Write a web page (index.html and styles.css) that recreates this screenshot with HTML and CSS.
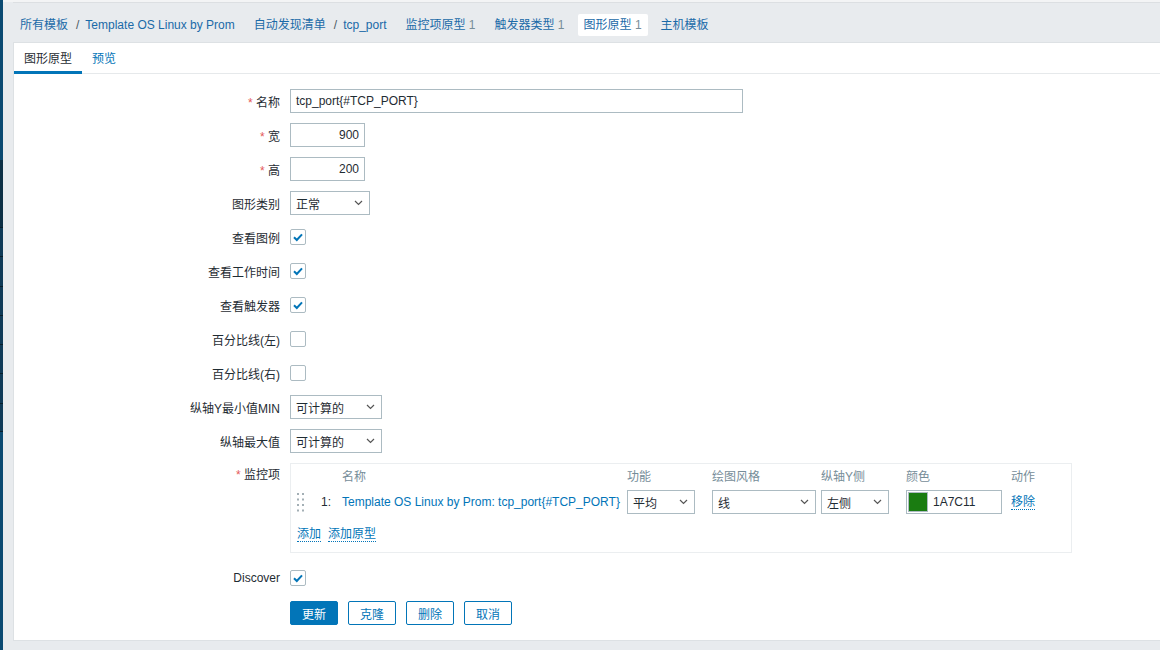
FILE: index.html
```html
<!DOCTYPE html>
<html>
<head>
<meta charset="utf-8">
<link rel="stylesheet" href="styles.css">
</head>
<body>
<div class="app">
  <div class="strip">
    <div class="seg seg-top"></div>
    <div class="seg seg-dark"></div>
    <div class="seg seg-item"></div>
    <div class="seg seg-item"></div>
    <div class="seg seg-item"></div>
    <div class="seg seg-item"></div>
    <div class="seg seg-item"></div>
    <div class="seg seg-item"></div>
    <div class="seg seg-item last"></div>
    <div class="seg seg-rest"></div>
  </div>
  <div class="main">
    <div class="crumbs">
      <div class="crumb-group">
        <a class="crumb">所有模板</a><span class="sep">/</span><a class="crumb">Template OS Linux by Prom</a>
      </div>
      <div class="crumb-group">
        <a class="crumb">自动发现清单</a><span class="sep">/</span><a class="crumb">tcp_port</a>
      </div>
      <a class="crumb">监控项原型 <span class="cnt">1</span></a>
      <a class="crumb">触发器类型 <span class="cnt">1</span></a>
      <span class="crumb active">图形原型 <span class="cnt">1</span></span>
      <a class="crumb">主机模板</a>
    </div>
    <div class="panel">
      <div class="tabs">
        <span class="tab current">图形原型</span>
        <a class="tab">预览</a>
      </div>
      <div class="form">
        <div class="row">
          <div class="label"><span class="req">*</span> 名称</div>
          <div class="ctrl"><div class="input wide">tcp_port{#TCP_PORT}</div></div>
        </div>
        <div class="row">
          <div class="label"><span class="req">*</span> 宽</div>
          <div class="ctrl"><div class="input num">900</div></div>
        </div>
        <div class="row">
          <div class="label"><span class="req">*</span> 高</div>
          <div class="ctrl"><div class="input num">200</div></div>
        </div>
        <div class="row">
          <div class="label">图形类别</div>
          <div class="ctrl"><div class="select w80"><span>正常</span><svg class="chev" width="9" height="6" viewBox="0 0 9 6"><path d="M1 1 L4.5 4.5 L8 1" fill="none" stroke="#555" stroke-width="1.2"/></svg></div></div>
        </div>
        <div class="row">
          <div class="label">查看图例</div>
          <div class="ctrl"><div class="cb"><svg width="14" height="14" viewBox="0 0 14 14"><path d="M3 7.2 L5.8 10 L11 4.3" fill="none" stroke="#0275b8" stroke-width="2"/></svg></div></div>
        </div>
        <div class="row">
          <div class="label">查看工作时间</div>
          <div class="ctrl"><div class="cb"><svg width="14" height="14" viewBox="0 0 14 14"><path d="M3 7.2 L5.8 10 L11 4.3" fill="none" stroke="#0275b8" stroke-width="2"/></svg></div></div>
        </div>
        <div class="row">
          <div class="label">查看触发器</div>
          <div class="ctrl"><div class="cb"><svg width="14" height="14" viewBox="0 0 14 14"><path d="M3 7.2 L5.8 10 L11 4.3" fill="none" stroke="#0275b8" stroke-width="2"/></svg></div></div>
        </div>
        <div class="row">
          <div class="label">百分比线(左)</div>
          <div class="ctrl"><div class="cb"></div></div>
        </div>
        <div class="row">
          <div class="label">百分比线(右)</div>
          <div class="ctrl"><div class="cb"></div></div>
        </div>
        <div class="row">
          <div class="label">纵轴Y最小值MIN</div>
          <div class="ctrl"><div class="select w92"><span>可计算的</span><svg class="chev" width="9" height="6" viewBox="0 0 9 6"><path d="M1 1 L4.5 4.5 L8 1" fill="none" stroke="#555" stroke-width="1.2"/></svg></div></div>
        </div>
        <div class="row">
          <div class="label">纵轴最大值</div>
          <div class="ctrl"><div class="select w92"><span>可计算的</span><svg class="chev" width="9" height="6" viewBox="0 0 9 6"><path d="M1 1 L4.5 4.5 L8 1" fill="none" stroke="#555" stroke-width="1.2"/></svg></div></div>
        </div>
        <div class="row row-items">
          <div class="label top"><span class="req">*</span> 监控项</div>
          <div class="ctrl">
            <div class="items">
              <div class="irow ihead">
                <div></div><div></div>
                <div>名称</div><div>功能</div><div>绘图风格</div><div>纵轴Y侧</div><div>颜色</div><div>动作</div>
              </div>
              <div class="irow idata">
                <div class="handle"><svg width="7" height="19" viewBox="0 0 7 19"><g fill="#a3afb5"><rect x="0" y="0" width="2" height="2"/><rect x="5" y="0" width="2" height="2"/><rect x="0" y="5.5" width="2" height="2"/><rect x="5" y="5.5" width="2" height="2"/><rect x="0" y="11" width="2" height="2"/><rect x="5" y="11" width="2" height="2"/><rect x="0" y="16.5" width="2" height="2"/><rect x="5" y="16.5" width="2" height="2"/></g></svg></div>
                <div class="num-idx">1:</div>
                <div><a class="link">Template OS Linux by Prom: tcp_port{#TCP_PORT}</a></div>
                <div><div class="select w68"><span>平均</span><svg class="chev" width="9" height="6" viewBox="0 0 9 6"><path d="M1 1 L4.5 4.5 L8 1" fill="none" stroke="#555" stroke-width="1.2"/></svg></div></div>
                <div><div class="select w104"><span>线</span><svg class="chev" width="9" height="6" viewBox="0 0 9 6"><path d="M1 1 L4.5 4.5 L8 1" fill="none" stroke="#555" stroke-width="1.2"/></svg></div></div>
                <div><div class="select w68"><span>左侧</span><svg class="chev" width="9" height="6" viewBox="0 0 9 6"><path d="M1 1 L4.5 4.5 L8 1" fill="none" stroke="#555" stroke-width="1.2"/></svg></div></div>
                <div><div class="color"><span class="swatch"></span><span>1A7C11</span></div></div>
                <div><a class="dlink">移除</a></div>
              </div>
              <div class="iadd">
                <a class="dlink">添加</a><a class="dlink">添加原型</a>
              </div>
            </div>
          </div>
        </div>
        <div class="row row-discover">
          <div class="label">Discover</div>
          <div class="ctrl"><div class="cb"><svg width="14" height="14" viewBox="0 0 14 14"><path d="M3 7.2 L5.8 10 L11 4.3" fill="none" stroke="#0275b8" stroke-width="2"/></svg></div></div>
        </div>
        <div class="row">
          <div class="label"></div>
          <div class="ctrl buttons">
            <button class="btn primary">更新</button>
            <button class="btn">克隆</button>
            <button class="btn">删除</button>
            <button class="btn">取消</button>
          </div>
        </div>
      </div>
    </div>
  </div>
</div>
</body>
</html>
```

FILE: styles.css
```css
* { box-sizing: border-box; }
html, body { margin: 0; padding: 0; }
body {
  width: 1160px;
  height: 650px;
  overflow: hidden;
  background: #e8ebee;
  font-family: "Liberation Sans", Arial, "Noto Sans CJK SC", sans-serif;
  font-size: 12px;
  color: #1f2c33;
}
a { text-decoration: none; color: #0275b8; cursor: pointer; }

.app { display: flex; height: 650px; }

.strip { width: 3px; display: flex; flex-direction: column; flex: none; }
.seg-top { height: 160px; background: #0b4a72; }
.seg-dark { height: 67px; background: #0c2f45; }
.seg-item { height: 29.3px; background: #0f3b58; border-top: 1px solid #081e2c; }
.seg-item.last { border-bottom: 1px solid #081e2c; }
.seg-rest { flex: 1; background: #0b4a72; }

.main {
  flex: 1;
  display: flex;
  flex-direction: column;
  border-top: 2px solid #f3f4f5;
  padding-left: 10px;
}

.crumbs {
  height: 40px;
  border-top: 1px solid #dcdfe2;
  display: flex;
  align-items: center;
  gap: 7px;
  padding-left: 1px;
  padding-top: 4px;
}
.crumb-group { display: flex; align-items: center; }
.crumb {
  color: #1a6aa8;
  padding: 4px 6px;
  line-height: 14px;
  border-radius: 2px;
  white-space: nowrap;
}
.crumb-group .crumb:first-child { padding-right: 0; }
.crumb-group .crumb:last-child { padding-left: 0; }
.sep { color: #4b5a63; margin: 0 6px 0 8px; }
.cnt { color: #768d99; }
.crumb.active { background: #fff; color: #1a6aa8; }

.panel {
  flex: 1;
  background: #fff;
  border: 1px solid #dde1e4;
  border-right: none;
  margin-bottom: 9px;
  display: flex;
  flex-direction: column;
}

.tabs {
  height: 31px;
  border-bottom: 1px solid #e6e9eb;
  display: flex;
  align-items: stretch;
}
.tab {
  padding: 0 10px;
  display: flex;
  align-items: center;
  color: #0275b8;
  border-bottom: 3px solid transparent;
  margin-bottom: -1px;
}
.tab.current { color: #1f2c33; border-bottom-color: #0275b8; }

.form { padding-top: 15px; }
.row {
  display: flex;
  align-items: center;
  gap: 10px;
  min-height: 24px;
  margin-bottom: 10px;
}
.label {
  width: 266px;
  flex: none;
  text-align: right;
  white-space: nowrap;
}
.label.top { align-self: flex-start; line-height: 24px; }
.req { color: #e45959; }
.ctrl { display: flex; align-items: center; }

.input {
  height: 24px;
  border: 1px solid #acbbc2;
  background: #fff;
  padding: 0 5px;
  line-height: 22px;
  white-space: nowrap;
}
.input.wide { width: 453px; }
.input.num { width: 75px; text-align: right; }

.select {
  height: 24px;
  border: 1px solid #acbbc2;
  background: #fff;
  display: flex;
  align-items: center;
  justify-content: space-between;
  padding: 0 6px 0 5px;
}
.select.w80 { width: 80px; }
.select.w92 { width: 92px; }
.select.w68 { width: 68px; }
.select.w104 { width: 104px; }
.chev { flex: none; }

.cb {
  width: 16px;
  height: 16px;
  border: 1px solid #acbbc2;
  border-radius: 2px;
  background: #fff;
  display: flex;
  align-items: center;
  justify-content: center;
}

.row-items { margin-bottom: 13px; }
.row-discover { margin-bottom: 11px; }

.items {
  width: 782px;
  border: 1px solid #ebeef0;
  padding: 2px 5px 10px 5px;
}
.irow {
  display: grid;
  grid-template-columns: 22px 24px 285px 85px 109px 85px 105px 1fr;
  align-items: center;
}
.ihead { height: 18px; color: #768d99; }
.idata { height: 24px; margin-top: 6px; }
.handle { display: flex; align-items: center; padding-left: 1px; padding-top: 1px; }
.num-idx { text-align: right; padding-right: 11px; }
.link { color: #0275b8; white-space: nowrap; }
.color {
  width: 96px;
  height: 24px;
  border: 1px solid #acbbc2;
  display: flex;
  align-items: center;
  gap: 5px;
  padding-left: 1px;
}
.swatch {
  width: 20px;
  height: 20px;
  background: #1a7c11;
  border: 1px solid #acbbc2;
}
.dlink {
  color: #0275b8;
  border-bottom: 1px dotted #0275b8;
  line-height: 14px;
}
.iadd {
  margin-top: 13px;
  display: flex;
  gap: 7px;
  padding-left: 1px;
}

.buttons { gap: 10px; }
.btn {
  height: 24px;
  width: 48px;
  padding: 0;
  border: 1px solid #0275b8;
  border-radius: 2px;
  background: #fff;
  color: #0275b8;
  font-family: "Liberation Sans", Arial, "Noto Sans CJK SC", sans-serif;
  font-size: 12px;
}
.btn.primary { background: #0275b8; color: #fff; }
```
